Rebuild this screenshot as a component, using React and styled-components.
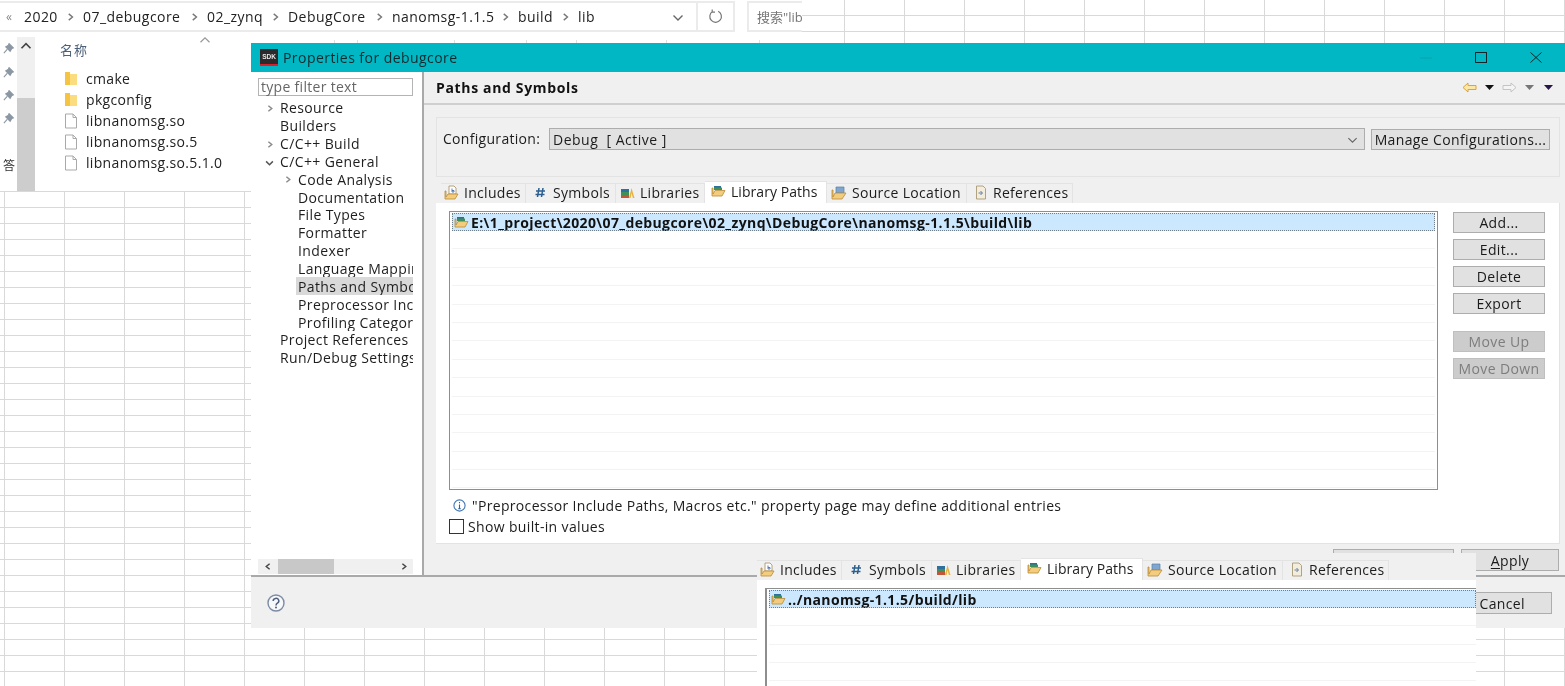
import React from "react";
import styled, { createGlobalStyle } from "styled-components";

const GlobalStyle = createGlobalStyle`
  html, body { margin: 0; padding: 0; background: #fff; }
  body { font-family: "Open Sans", "Noto Sans", "Noto Sans CJK SC", sans-serif; color: #1c1c1c; }
  * { box-sizing: border-box; }
`;

const Desktop = styled.div`
  position: relative;
  width: 1565px;
  height: 686px;
  overflow: hidden;
  background-color: #fff;
  background-image: linear-gradient(#d9d9d9 1px, transparent 1px),
    linear-gradient(90deg, #d9d9d9 1px, transparent 1px);
  background-size: 60px 16px;
  background-position: 4px 15px;
  filter: blur(0.4px);
`;

/* ---------- explorer window behind the dialog ---------- */
const Explorer = styled.div`
  position: absolute;
  left: 0;
  top: 0;
  width: 802px;
  height: 191px;
  background: #fff;
  overflow: hidden;
`;
const AddressRow = styled.div`
  display: flex;
  height: 32px;
  padding-top: 1px;
`;
const AddressBar = styled.div`
  display: flex;
  flex: none;
  align-items: center;
  width: 735px;
  height: 31px;
  border: 2px solid #ebebeb;
  border-left: none;
  font-size: 14px;
  color: #222;
`;
const Crumbs = styled.div`
  display: flex;
  align-items: center;
  flex: 1;
  padding-left: 6px;
`;
const Crumb = styled.span`
  width: ${p => p.$w}px;
  white-space: nowrap;
  letter-spacing: 0.45px;
`;
const CrumbBack = styled(Crumb)`
  color: #888;
  font-size: 12px;
`;
const CrumbSep = styled.span`
  display: flex;
  justify-content: center;
  width: 26px;
`;
const AddressButton = styled.div`
  display: flex;
  align-items: center;
  justify-content: center;
  width: ${p => p.$w}px;
  height: 100%;
  border-left: ${p => (p.$divided ? "2px solid #ebebeb" : "none")};
`;
const SearchBox = styled.div`
  display: flex;
  flex: none;
  align-items: center;
  width: 55px;
  height: 31px;
  margin-left: 12px;
  padding-left: 8px;
  border: 2px solid #ebebeb;
  border-right: none;
  font-size: 13px;
  color: #777;
  white-space: nowrap;
  overflow: hidden;
`;
const ExplorerBody = styled.div`
  display: flex;
  height: 159px;
`;
const QuickAccess = styled.div`
  display: flex;
  flex-direction: column;
  width: 17px;
  padding-top: 5px;
  font-size: 12px;
  overflow: hidden;
`;
const PinSlot = styled.div`
  display: flex;
  justify-content: flex-end;
  align-items: center;
  height: 23.4px;
  padding-right: 3px;
`;
const QuickLabel = styled.div`
  margin-top: 27px;
  margin-left: 3px;
  width: 12px;
  overflow: hidden;
  line-height: 16px;
  font-size: 12px;
  color: #333;
`;
const VScroll = styled.div`
  width: 18px;
  margin-top: 5px;
  background: #f0f0f0;
  display: flex;
  flex-direction: column;
`;
const VArrow = styled.div`
  display: flex;
  justify-content: center;
  align-items: center;
  height: 61px;
  padding-bottom: 43px;
`;
const VThumb = styled.div`
  flex: 1;
  background: #cdcdcd;
`;
const FileArea = styled.div`
  flex: 1;
  display: flex;
  flex-direction: column;
`;
const ColumnRow = styled.div`
  display: flex;
  height: 36px;
`;
const ColumnCell = styled.div`
  position: relative;
  width: ${p => p.$w}px;
  height: 11px;
  &::after {
    content: "";
    position: absolute;
    right: 0;
    top: 8px;
    width: 1px;
    height: 3px;
    background: #e0e0e0;
  }
`;
const ColumnTitle = styled.span`
  position: absolute;
  left: 25px;
  top: 8px;
  font-size: 13px;
  color: #4c607a;
  letter-spacing: 1px;
  white-space: nowrap;
  font-family: "Noto Sans CJK SC", sans-serif;
`;
const SortCaret = styled.span`
  position: absolute;
  left: 164px;
  top: -3px;
`;
const FileRow = styled.div`
  display: flex;
  align-items: center;
  height: 21px;
  padding-left: 29px;
  font-size: 14px;
  letter-spacing: 0.33px;
  color: #222;
  & > svg { margin-right: 8px; }
`;

/* ---------- properties dialog ---------- */
const Dialog = styled.div`
  position: absolute;
  left: 251px;
  top: 43px;
  width: 1314px;
  height: 585px;
  background: #f0f0f0;
  display: flex;
  flex-direction: column;
`;
const TitleBar = styled.div`
  display: flex;
  align-items: center;
  height: 29px;
  background: #00b7c3;
  padding: 0 2px 0 9px;
  font-size: 14px;
  letter-spacing: 0.45px;
  color: #102a2e;
`;
const SdkLogo = styled.div`
  display: flex;
  align-items: center;
  justify-content: center;
  width: 18px;
  height: 17px;
  margin-right: 5px;
  background: #2b2b2b;
  border-bottom: 2px solid #d8202a;
  color: #e8e8e8;
  font-family: "Liberation Sans", sans-serif;
  font-size: 6.5px;
  font-weight: 700;
  letter-spacing: 0;
`;
const TitleText = styled.div`
  flex: 1;
`;
const WindowButton = styled.div`
  display: flex;
  align-items: center;
  justify-content: center;
  width: 55px;
  height: 29px;
`;
const DialogBody = styled.div`
  display: flex;
  height: 503px;
`;
const LeftPane = styled.div`
  display: flex;
  flex-direction: column;
  width: 171px;
  padding: 6px 9px 1px 7px;
  background: #fff;
`;
const FilterInput = styled.div`
  height: 18px;
  border: 1px solid #b4b4b4;
  padding-left: 2px;
  font-size: 14px;
  line-height: 16px;
  letter-spacing: 0.3px;
  color: #666;
`;
const Tree = styled.div`
  flex: 1;
  padding-top: 3px;
  overflow: hidden;
`;
const TreeRow = styled.div`
  display: flex;
  align-items: center;
  height: 17.85px;
  padding-left: ${p => (p.$level ? 40 : 22)}px;
  position: relative;
  font-size: 14px;
  letter-spacing: 0.38px;
  color: #1e1e1e;
  white-space: nowrap;
  overflow: hidden;
  background: ${p => (p.$selected ? "linear-gradient(90deg, transparent 38px, #d9d9d9 38px)" : "none")};
`;
const TreeToggle = styled.span`
  position: absolute;
  left: ${p => (p.$level ? 25 : 7)}px;
  top: 5px;
  display: flex;
`;
const HScroll = styled.div`
  display: flex;
  align-items: center;
  justify-content: space-between;
  height: 15px;
  background: #f0f0f0;
`;
const HThumb = styled.div`
  width: 56px;
  height: 15px;
  margin-right: auto;
  background: #c8c8c8;
`;
const ScrollArrow = styled.span`
  display: flex;
  width: 20px;
  justify-content: center;
`;
const Divider = styled.div`
  width: 2px;
  background: #a9a9a9;
`;
const RightPane = styled.div`
  flex: 1;
  display: flex;
  flex-direction: column;
`;
const PageHeader = styled.div`
  display: flex;
  align-items: center;
  justify-content: space-between;
  height: 33px;
  padding: 0 10px 0 12px;
  border-bottom: 2px solid #cfcfcf;
`;
const PageTitle = styled.div`
  font-size: 14px;
  font-weight: 700;
  letter-spacing: 0.65px;
  color: #111;
`;
const NavIcons = styled.div`
  display: flex;
  align-items: center;
  gap: 6px;
`;
const ConfigGroup = styled.div`
  display: flex;
  align-items: flex-start;
  height: 60px;
  margin: 12px 5px 4px 12px;
  padding: 10px 0 0 6px;
  border: 1px solid #e3e3e3;
`;
const ConfigLabel = styled.div`
  width: 106px;
  line-height: 22px;
  font-size: 14px;
  letter-spacing: 0.3px;
`;
const SelectBox = styled.div`
  display: flex;
  align-items: center;
  justify-content: space-between;
  width: 816px;
  height: 22px;
  padding: 0 6px 0 3px;
  background: #e1e1e1;
  border: 1px solid #adadad;
  font-size: 14px;
  letter-spacing: 0.5px;
`;
const Button = styled.div`
  display: flex;
  align-items: center;
  justify-content: center;
  width: ${p => p.$w || 92}px;
  height: ${p => p.$h || 21}px;
  flex: none;
  background: ${p => (p.$disabled ? "#cccccc" : "#e1e1e1")};
  border: 1px solid ${p => (p.$disabled ? "#bfbfbf" : "#adadad")};
  color: ${p => (p.$disabled ? "#7d7d7d" : "#1a1a1a")};
  font-size: 14px;
  letter-spacing: 0.37px;
  white-space: nowrap;
  & u { text-underline-offset: 2px; }
`;
const ManageButton = styled(Button)`
  margin-left: 6px;
  margin-top: 1px;
`;
const TabStrip = styled.div`
  display: flex;
  align-items: flex-end;
  height: 22px;
  margin-left: ${p => p.$inset}px;
`;
const Tab = styled.div`
  display: flex;
  align-items: center;
  width: ${p => p.$w}px;
  height: ${p => (p.$active ? 22 : 20)}px;
  padding-left: ${p => p.$pad}px;
  padding-bottom: ${p => (p.$active ? 3 : 2)}px;
  background: ${p => (p.$active ? "#fff" : "#f0f0f0")};
  border: 1px solid #e3e3e3;
  border-bottom: none;
  border-left: none;
  font-size: 14px;
  letter-spacing: ${p => (p.$active ? 0.05 : 0.3)}px;
  white-space: nowrap;
  & > svg { margin-right: 5px; flex: none; }
`;
const TabPanel = styled.div`
  display: flex;
  flex-direction: column;
  height: 341px;
  margin: 0 5px 0 12px;
  padding: 8px 0 0 13px;
  background: #fff;
  border: 1px solid #e3e3e3;
  border-top: none;
  border-left: none;
`;
const PanelTop = styled.div`
  display: flex;
  height: 279px;
`;
const PathList = styled.div`
  width: 989px;
  height: 279px;
  padding: 1px 2px 0 2px;
  border: 1px solid #8e8e8e;
  overflow: hidden;
`;
const PathRow = styled.div`
  display: flex;
  align-items: center;
  height: 18.4px;
  padding-left: 2px;
  border-bottom: 1px solid #f3f3f3;
`;
const SelectedPath = styled.div`
  display: flex;
  align-items: center;
  height: 18px;
  padding-left: 2px;
  background: #cce8ff;
  outline: 1px dotted #6f7f8c;
  outline-offset: -1px;
  font-size: 14px;
  font-weight: 700;
  letter-spacing: 0.38px;
  color: #111;
  white-space: nowrap;
  & > svg { margin-right: 2px; flex: none; }
`;
const SideButtons = styled.div`
  display: flex;
  flex-direction: column;
  gap: 6px;
  margin-left: 15px;
  margin-top: 1px;
`;
const SideGap = styled.div`
  height: 5px;
`;
const InfoRow = styled.div`
  display: flex;
  align-items: center;
  height: 16px;
  margin-top: 7px;
  padding-left: 4px;
  font-size: 14px;
  letter-spacing: 0.33px;
  & > svg { margin-right: 6px; }
`;
const CheckRow = styled.div`
  display: flex;
  align-items: center;
  height: 16px;
  margin-top: 5px;
  font-size: 14px;
  letter-spacing: 0.35px;
`;
const CheckBox = styled.span`
  width: 15px;
  height: 15px;
  margin-right: 4px;
  border: 1px solid #333;
  background: #fff;
`;
const ApplyRow = styled.div`
  display: flex;
  justify-content: flex-end;
  gap: 7px;
  padding: 5px 6px 0 0;
`;
const FooterRule = styled.div`
  height: 2px;
  background: #a9a9a9;
`;
const Footer = styled.div`
  flex: 1;
  display: flex;
  align-items: center;
  justify-content: space-between;
  padding: 0 13px 0 16px;
`;
const CancelButton = styled(Button)`
  justify-content: flex-end;
  padding-right: 26px;
  margin-top: 1px;
`;

/* ---------- pasted crop of the tab folder ---------- */
const PastedCrop = styled.div`
  position: absolute;
  left: 757px;
  top: 553px;
  width: 719px;
  height: 133px;
  display: flex;
  flex-direction: column;
  background: #f0f0f0;
`;
const CropTabs = styled.div`
  padding-top: 5px;
`;
const CropPanel = styled.div`
  flex: 1;
  padding: 8px 0 0 8px;
  background: #fff;
`;
const CropList = styled.div`
  height: 100%;
  padding: 1px 0 0 2px;
  border-top: 1px solid #8e8e8e;
  border-left: 2px solid #8e8e8e;
  overflow: hidden;
`;
const CropRow = styled(PathRow)`
  height: 18.3px;
`;

/* ---------- drawings ---------- */
const Chevron = ({ dir = "right", size = 9, color = "#8a8a8a", w = 1.3 }) => {
  const paths = {
    right: "M3 1.5 L6 4 L3 6.5",
    left: "M5 1.5 L2 4 L5 6.5",
    down: "M1 3 L4 6 L7 3",
    up: "M1 5.5 L4 2.5 L7 5.5",
  };
  return (
    <svg width={size} height={size} viewBox="0 0 8 8">
      <path d={paths[dir]} fill="none" stroke={color} strokeWidth={w} />
    </svg>
  );
};

const Pin = () => (
  <svg width="11" height="11" viewBox="0 0 10 10">
    <path d="M5.5 0.5 L9.5 4.5 L8 5 L6.5 7.5 L2.5 3.5 L5 2 Z M3.8 5.8 L0.8 9.2" fill="#8b97a3" stroke="#8b97a3" strokeWidth="1" />
  </svg>
);

const Folder = () => (
  <svg width="14" height="16" viewBox="0 0 14 16">
    <path d="M1 1 H6 V14 H1 Z" fill="#f5c443" />
    <path d="M6 3 H13 V14 H6 Z" fill="#fbdc7f" />
  </svg>
);

const FileIcon = () => (
  <svg width="14" height="16" viewBox="0 0 14 16">
    <path d="M1.5 1 H9 L12.5 4.5 V15 H1.5 Z M9 1 V4.5 H12.5" fill="#fff" stroke="#a9a9a9" />
  </svg>
);

const OpenFolder = ({ size = 15 }) => (
  <svg width={size} height={size * 0.87} viewBox="0 0 15 13">
    <path d="M3 2 H10 V6 H3 Z" fill="#2f6f9e" />
    <path d="M3 3.5 H11 V6 H3 Z" fill="#3f8f57" />
    <path d="M1 4 V12 H11 L14 6.5 H4 L2 10 V4 Z" fill="#f3cd7d" stroke="#b98a35" strokeWidth="0.8" />
  </svg>
);

const IncludesIcon = () => (
  <svg width="15" height="15" viewBox="0 0 15 15">
    <path d="M5 1 H10 L12 3 V9 H5 Z" fill="#fff" stroke="#a78b5a" strokeWidth="0.8" />
    <path d="M8 3.5 V7 M8 7 H10 V5.5 H8" fill="none" stroke="#4a6fa5" strokeWidth="0.9" />
    <path d="M1 6 V14 H11 L14 9 H4 L2 12 V6 Z" fill="#f3cd7d" stroke="#b98a35" strokeWidth="0.8" />
  </svg>
);

const HashIcon = () => (
  <svg width="15" height="15" viewBox="0 0 15 15">
    <path d="M6 3 L4.5 12 M10 3 L8.5 12 M3 6 H12 M2.5 9.5 H11.5" stroke="#2b5f8f" strokeWidth="1.5" fill="none" />
  </svg>
);

const BooksIcon = () => (
  <svg width="15" height="13" viewBox="0 0 15 13">
    <path d="M1 9 H9 V12 H1 Z" fill="#c0563a" />
    <path d="M1 6 H9 V9 H1 Z" fill="#3f8f57" />
    <path d="M1 3 H9 V6 H1 Z" fill="#2f6f9e" />
    <path d="M9 12 L11.5 2 L14.5 12 H12.8 L11.6 7 L10.6 12 Z" fill="#e8b33c" />
  </svg>
);

const SourceIcon = () => (
  <svg width="16" height="14" viewBox="0 0 16 14">
    <path d="M5 1 H13 V7 H5 Z" fill="#7ea6cf" stroke="#5d7fa6" strokeWidth="0.7" />
    <path d="M1 4 V13 H11 L15 7 H4 L2 11 V4 Z" fill="#f3cd7d" stroke="#b98a35" strokeWidth="0.8" />
  </svg>
);

const ReferenceIcon = () => (
  <svg width="14" height="15" viewBox="0 0 14 15">
    <path d="M2.5 1 H9 L11.5 3.5 V14 H2.5 Z" fill="#f4eddc" stroke="#a89a76" strokeWidth="0.9" />
    <path d="M4.5 8 H8 M6.5 6 L8.5 8 L6.5 10" fill="none" stroke="#5d7fa6" strokeWidth="1" />
  </svg>
);

const NavArrow = ({ flip, fill, stroke }) => (
  <svg width="15" height="11" viewBox="0 0 15 11" style={flip ? { transform: "scaleX(-1)" } : undefined}>
    <path d="M1 5.5 L6 1 V3.5 H14 V7.5 H6 V10 Z" fill={fill} stroke={stroke} strokeWidth="1" />
  </svg>
);

const DropMark = ({ color }) => (
  <svg width="13" height="5" viewBox="0 0 13 5">
    <path d="M2 0 H11 L6.5 5 Z" fill={color} />
  </svg>
);

const tabs = [
  { label: "Includes", w: 85, pad: 3, icon: <IncludesIcon /> },
  { label: "Symbols", w: 90, pad: 7, icon: <HashIcon /> },
  { label: "Libraries", w: 89, pad: 4, icon: <BooksIcon /> },
  { label: "Library Paths", w: 122, pad: 6, icon: <OpenFolder />, active: true },
  { label: "Source Location", w: 140, pad: 4, icon: <SourceIcon /> },
  { label: "References", w: 106, pad: 7, icon: <ReferenceIcon /> },
];

const Tabs = ({ inset }) => (
  <TabStrip $inset={inset}>
    {tabs.map(t => (
      <Tab key={t.label} $w={t.w} $pad={t.pad} $active={t.active}>
        {t.icon}
        {t.label}
      </Tab>
    ))}
  </TabStrip>
);

const crumbs = [
  ["2020", 33],
  ["07_debugcore", 98],
  ["02_zynq", 55],
  ["DebugCore", 78],
  ["nanomsg-1.1.5", 100],
  ["build", 34],
  ["lib", 16],
];

const files = [
  ["cmake", true],
  ["pkgconfig", true],
  ["libnanomsg.so"],
  ["libnanomsg.so.5"],
  ["libnanomsg.so.5.1.0"],
];

const treeRows = [
  { label: "Resource", toggle: "right" },
  { label: "Builders" },
  { label: "C/C++ Build", toggle: "right" },
  { label: "C/C++ General", toggle: "down" },
  { label: "Code Analysis", level: 1, toggle: "right" },
  { label: "Documentation", level: 1 },
  { label: "File Types", level: 1 },
  { label: "Formatter", level: 1 },
  { label: "Indexer", level: 1 },
  { label: "Language Mappings", level: 1 },
  { label: "Paths and Symbols", level: 1, selected: true },
  { label: "Preprocessor Include Paths", level: 1 },
  { label: "Profiling Categories", level: 1 },
  { label: "Project References" },
  { label: "Run/Debug Settings" },
];

const App = () => {
  return (
    <>
      <GlobalStyle />
      <Desktop>
        <Explorer>
          <AddressRow>
            <AddressBar>
              <Crumbs>
                <CrumbBack $w={18}>«</CrumbBack>
                {crumbs.map(([text, w], i) => (
                  <React.Fragment key={text}>
                    {i > 0 && <CrumbSep><Chevron size={10} color="#777" w={1.1} /></CrumbSep>}
                    <Crumb $w={w}>{text}</Crumb>
                  </React.Fragment>
                ))}
              </Crumbs>
              <AddressButton $w={37}>
                <Chevron dir="down" size={12} color="#666" w={0.9} />
              </AddressButton>
              <AddressButton $w={37} $divided>
                <svg width="15" height="15" viewBox="0 0 15 15">
                  <path d="M4.5 2.6 A5.8 5.8 0 1 0 10.2 2.3 M4.2 0.5 V3.2 H7" fill="none" stroke="#777" strokeWidth="1.2" />
                </svg>
              </AddressButton>
            </AddressBar>
            <SearchBox>搜索"lib"</SearchBox>
          </AddressRow>
          <ExplorerBody>
            <QuickAccess>
              <PinSlot><Pin /></PinSlot>
              <PinSlot><Pin /></PinSlot>
              <PinSlot><Pin /></PinSlot>
              <PinSlot><Pin /></PinSlot>
              <QuickLabel>答</QuickLabel>
            </QuickAccess>
            <VScroll>
              <VArrow><Chevron dir="up" size={12} color="#444" w={1.1} /></VArrow>
              <VThumb />
            </VScroll>
            <FileArea>
              <ColumnRow>
                <ColumnCell $w={300}>
                  <ColumnTitle>名称</ColumnTitle>
                  <SortCaret><Chevron dir="up" size={12} color="#999" w={0.8} /></SortCaret>
                </ColumnCell>
                <ColumnCell $w={23} />
                <ColumnCell $w={97} />
                <ColumnCell $w={72} />
                <ColumnCell $w={50} />
                <ColumnCell $w={90} />
                <ColumnCell $w={93} />
              </ColumnRow>
              {files.map(([name, isFolder]) => (
                <FileRow key={name}>
                  {isFolder ? <Folder /> : <FileIcon />}
                  {name}
                </FileRow>
              ))}
            </FileArea>
          </ExplorerBody>
        </Explorer>

        <Dialog>
          <TitleBar>
            <SdkLogo>SDK</SdkLogo>
            <TitleText>Properties for debugcore</TitleText>
            <WindowButton>
              <svg width="12" height="2" viewBox="0 0 12 2"><path d="M0 1 H12" stroke="#07a3ae" strokeWidth="1" /></svg>
            </WindowButton>
            <WindowButton>
              <svg width="12" height="11" viewBox="0 0 12 11"><rect x="0.5" y="0.5" width="11" height="10" fill="none" stroke="#10262a" /></svg>
            </WindowButton>
            <WindowButton>
              <svg width="12" height="11" viewBox="0 0 12 11"><path d="M0.5 0.5 L11.5 10.5 M11.5 0.5 L0.5 10.5" stroke="#10262a" /></svg>
            </WindowButton>
          </TitleBar>
          <DialogBody>
            <LeftPane>
              <FilterInput>type filter text</FilterInput>
              <Tree>
                {treeRows.map(r => (
                  <TreeRow key={r.label} $level={r.level} $selected={r.selected}>
                    {r.toggle && (
                      <TreeToggle $level={r.level}>
                        <Chevron dir={r.toggle} color={r.toggle === "down" ? "#555" : "#8a8a8a"} />
                      </TreeToggle>
                    )}
                    {r.label}
                  </TreeRow>
                ))}
              </Tree>
              <HScroll>
                <ScrollArrow><Chevron dir="left" color="#444" /></ScrollArrow>
                <HThumb />
                <ScrollArrow><Chevron dir="right" color="#444" /></ScrollArrow>
              </HScroll>
            </LeftPane>
            <Divider />
            <RightPane>
              <PageHeader>
                <PageTitle>Paths and Symbols</PageTitle>
                <NavIcons>
                  <NavArrow fill="#fbe7a8" stroke="#d9a441" />
                  <DropMark color="#111" />
                  <NavArrow flip fill="#f4f4f4" stroke="#c4c4c4" />
                  <DropMark color="#777" />
                  <DropMark color="#2a1548" />
                </NavIcons>
              </PageHeader>
              <ConfigGroup>
                <ConfigLabel>Configuration:</ConfigLabel>
                <SelectBox>
                  Debug&nbsp; [ Active ]
                  <Chevron dir="down" size={11} color="#666" w={0.8} />
                </SelectBox>
                <ManageButton $w={179}>Manage Configurations...</ManageButton>
              </ConfigGroup>
              <Tabs inset={17} />
              <TabPanel>
                <PanelTop>
                  <PathList>
                    <SelectedPath>
                      <OpenFolder />
                      {"E:\\1_project\\2020\\07_debugcore\\02_zynq\\DebugCore\\nanomsg-1.1.5\\build\\lib"}
                    </SelectedPath>
                    {Array.from({ length: 14 }, (_, i) => <PathRow key={i} />)}
                  </PathList>
                  <SideButtons>
                    <Button>Add...</Button>
                    <Button>Edit...</Button>
                    <Button>Delete</Button>
                    <Button>Export</Button>
                    <SideGap />
                    <Button $disabled>Move Up</Button>
                    <Button $disabled>Move Down</Button>
                  </SideButtons>
                </PanelTop>
                <InfoRow>
                  <svg width="13" height="13" viewBox="0 0 13 13">
                    <circle cx="6.5" cy="6.5" r="5.6" fill="#fff" stroke="#3f76b5" strokeWidth="1.1" />
                    <path d="M6.5 5.4 V9.8 M6.5 3 V4.2 M5.2 9.8 H7.8" stroke="#2f5f9e" strokeWidth="1.1" fill="none" />
                  </svg>
                  "Preprocessor Include Paths, Macros etc." property page may define additional entries
                </InfoRow>
                <CheckRow>
                  <CheckBox />
                  Show built-in values
                </CheckRow>
              </TabPanel>
              <ApplyRow>
                <Button $w={121} $h={22} />
                <Button $w={98} $h={22}><span><u>A</u>pply</span></Button>
              </ApplyRow>
            </RightPane>
          </DialogBody>
          <FooterRule />
          <Footer>
            <svg width="18" height="18" viewBox="0 0 18 18">
              <circle cx="9" cy="9" r="8" fill="#f7f8fa" stroke="#7d8ba3" strokeWidth="1.4" />
              <path d="M6.2 7 A2.8 2.6 0 1 1 10.4 9.2 C9.3 9.9 9 10.3 9 11.4" fill="none" stroke="#4f5f7d" strokeWidth="1.5" />
              <circle cx="9" cy="13.6" r="1" fill="#4f5f7d" />
            </svg>
            <CancelButton $w={97} $h={22}>Cancel</CancelButton>
          </Footer>
        </Dialog>

        <PastedCrop>
          <CropTabs>
            <Tabs inset={0} />
          </CropTabs>
          <CropPanel>
            <CropList>
              <SelectedPath>
                <OpenFolder />
                ../nanomsg-1.1.5/build/lib
              </SelectedPath>
              {Array.from({ length: 5 }, (_, i) => <CropRow key={i} />)}
            </CropList>
          </CropPanel>
        </PastedCrop>
      </Desktop>
    </>
  );
};

export default App;
